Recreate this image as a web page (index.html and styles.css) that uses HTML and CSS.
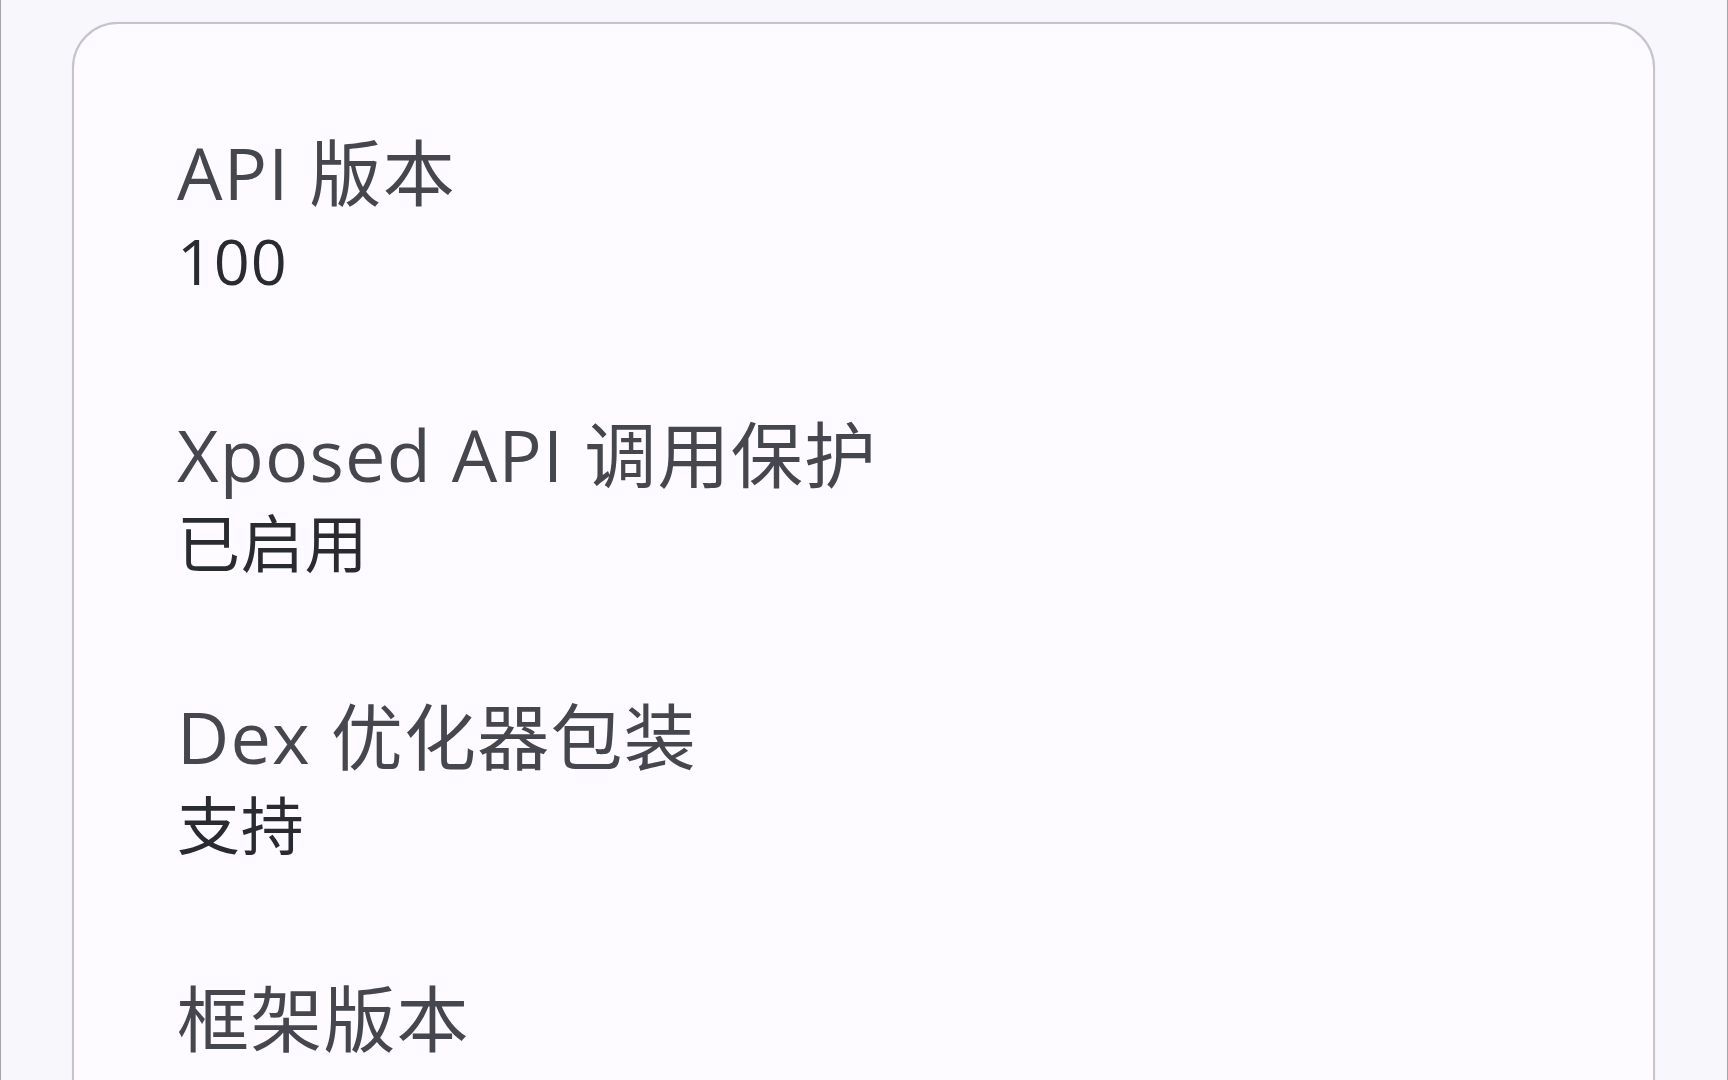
FILE: index.html
```html
<!DOCTYPE html>
<html lang="zh-CN">
<head>
<meta charset="utf-8">
<title>LSPosed</title>
<link rel="stylesheet" href="styles.css">
</head>
<body>
<div class="screen">
  <section class="card">
    <div class="item">
      <div class="title">API 版本</div>
      <div class="value">100</div>
    </div>
    <div class="item">
      <div class="title">Xposed API 调用保护</div>
      <div class="value">已启用</div>
    </div>
    <div class="item">
      <div class="title">Dex 优化器包装</div>
      <div class="value">支持</div>
    </div>
    <div class="item">
      <div class="title">框架版本</div>
      <div class="value">1.9.2 (7024)</div>
    </div>
  </section>
</div>
</body>
</html>
```

FILE: styles.css
```css
html, body {
  margin: 0;
  height: 100%;
  overflow: hidden;
}

body {
  background: #f8f7fb;
  font-family: "Open Sans", "Noto Sans CJK SC", sans-serif;
}

.screen {
  height: 1080px;
  box-sizing: border-box;
  border-left: 1px solid #a4a4a8;
  border-right: 1px solid #a4a4a8;
  padding: 22px 72px 0 71px;
  overflow: hidden;
}

.card {
  box-sizing: border-box;
  height: 1300px;
  border: 2px solid #c6c3cd;
  border-radius: 46px;
  background: #fdfbff;
  padding: 96px 103px;
  display: flex;
  flex-direction: column;
  gap: 104px;
  box-shadow: 0 0 1px #d4d1da;
}

.item {
  display: flex;
  flex-direction: column;
}

.title {
  font-size: 72px;
  line-height: 104px;
  letter-spacing: 1.2px;
  color: #46474e;
}

.value {
  font-size: 63px;
  line-height: 74px;
  letter-spacing: 0.8px;
  color: #2a2b30;
}
```
